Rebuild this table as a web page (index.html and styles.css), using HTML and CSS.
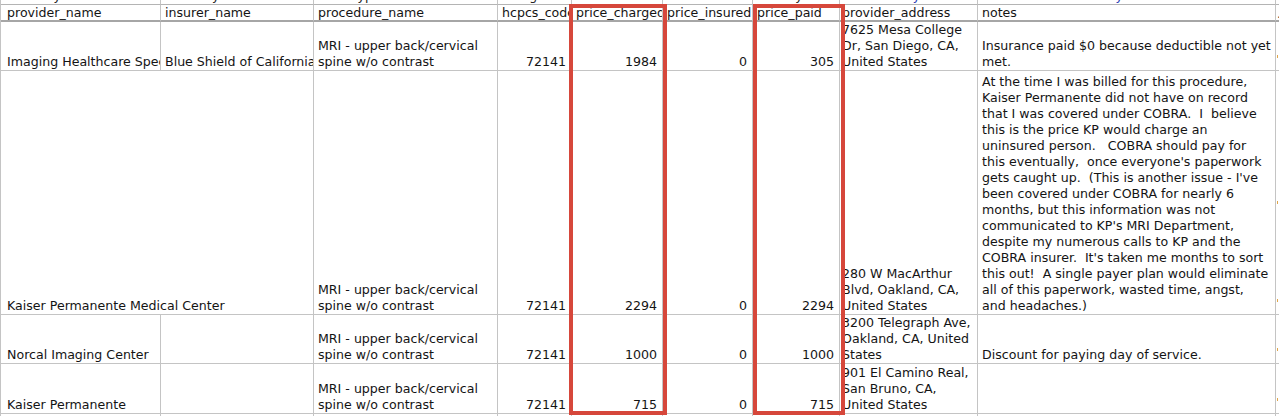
FILE: index.html
```html
<!DOCTYPE html>
<html>
<head>
<meta charset="utf-8">
<link rel="stylesheet" href="styles.css">
</head>
<body>
<div class="sheet">
  <div class="grid">
    <!-- row above header (only descenders visible) -->
    <div class="c top first">Costs by</div>
    <div class="c top">Billed by</div>
    <div class="c top">Scan types</div>
    <div class="c top">Using</div>
    <div class="c top"></div>
    <div class="c top"></div>
    <div class="c top">Paid by</div>
    <div class="c top link">Address key</div>
    <div class="c top link">Notes about this entry</div>
    <div class="c top last"></div>

    <!-- header -->
    <div class="c hd first">provider_name</div>
    <div class="c hd">insurer_name</div>
    <div class="c hd">procedure_name</div>
    <div class="c hd">hcpcs_code</div>
    <div class="c hd">price_charged</div>
    <div class="c hd">price_insured</div>
    <div class="c hd">price_paid</div>
    <div class="c hd addr">provider_address</div>
    <div class="c hd">notes</div>
    <div class="c hd last"><span class="dot">.</span></div>

    <!-- row 1 -->
    <div class="c first">Imaging Healthcare Specialists</div>
    <div class="c">Blue Shield of California</div>
    <div class="c wrap">MRI - upper back/cervical<br>spine w/o contrast</div>
    <div class="c num">72141</div>
    <div class="c num">1984</div>
    <div class="c num">0</div>
    <div class="c num">305</div>
    <div class="c wrap addr">7625 Mesa College<br>Dr, San Diego, CA,<br>United States</div>
    <div class="c wrap">Insurance paid $0 because deductible not yet<br>met.</div>
    <div class="c last"><span class="tick"></span></div>

    <!-- row 2 -->
    <div class="c first span2">Kaiser Permanente Medical Center</div>
    <div class="c wrap">MRI - upper back/cervical<br>spine w/o contrast</div>
    <div class="c num">72141</div>
    <div class="c num">2294</div>
    <div class="c num">0</div>
    <div class="c num">2294</div>
    <div class="c wrap addr">280 W MacArthur<br>Blvd, Oakland, CA,<br>United States</div>
    <div class="c wrap">At the time I was billed for this procedure,<br>Kaiser Permanente did not have on record<br>that I was covered under COBRA.  I  believe<br>this is the price KP would charge an<br>uninsured person.   COBRA should pay for<br>this eventually,  once everyone's paperwork<br>gets caught up.  (This is another issue - I've<br>been covered under COBRA for nearly 6<br>months, but this information was not<br>communicated to KP's MRI Department,<br>despite my numerous calls to KP and the<br>COBRA insurer.  It's taken me months to sort<br>this out!  A single payer plan would eliminate<br>all of this paperwork, wasted time, angst,<br>and headaches.)</div>
    <div class="c last col-ticks"><span class="tick"></span><span class="tick"></span></div>

    <!-- row 3 -->
    <div class="c first">Norcal Imaging Center</div>
    <div class="c"></div>
    <div class="c wrap">MRI - upper back/cervical<br>spine w/o contrast</div>
    <div class="c num">72141</div>
    <div class="c num">1000</div>
    <div class="c num">0</div>
    <div class="c num">1000</div>
    <div class="c wrap addr">3200 Telegraph Ave,<br>Oakland, CA, United<br>States</div>
    <div class="c wrap">Discount for paying day of service.</div>
    <div class="c last"><span class="tick"></span></div>

    <!-- row 4 -->
    <div class="c first">Kaiser Permanente</div>
    <div class="c"></div>
    <div class="c wrap">MRI - upper back/cervical<br>spine w/o contrast</div>
    <div class="c num">72141</div>
    <div class="c num">715</div>
    <div class="c num">0</div>
    <div class="c num">715</div>
    <div class="c wrap addr">901 El Camino Real,<br>San Bruno, CA,<br>United States</div>
    <div class="c wrap"></div>
    <div class="c last"><span class="tick"></span></div>

    <!-- row 5 (cut off) -->
    <div class="c first"></div>
    <div class="c"></div>
    <div class="c"></div>
    <div class="c"></div>
    <div class="c"></div>
    <div class="c"></div>
    <div class="c"></div>
    <div class="c"></div>
    <div class="c"></div>
    <div class="c last"></div>
  </div>

  <div class="highlight hl-charged"></div>
  <div class="highlight hl-paid"></div>
</div>
</body>
</html>
```

FILE: styles.css
```css
* {
  box-sizing: border-box;
}

html, body {
  margin: 0;
  padding: 0;
  background: #ffffff;
  overflow: hidden;
}

body {
  width: 1279px;
  height: 416px;
  font-family: "DejaVu Sans", Verdana, sans-serif;
  font-size: 12.6px;
  color: #141414;
}

.sheet {
  position: relative;
  width: 1279px;
  height: 416px;
  overflow: hidden;
}

.grid {
  display: grid;
  grid-template-columns: 160px 153px 184px 74px 91px 90px 87px 138px 298px 20px;
  grid-template-rows: 5px 17px 49px 244px 49px 50px 20px;
  border-left: 1px solid #c4c4c4;
  width: 1296px;
}

.c {
  border-right: 1px solid #c4c4c4;
  border-bottom: 1px solid #c4c4c4;
  padding: 0 4px;
  line-height: 16px;
  white-space: pre;
  overflow: hidden;
  display: flex;
  align-items: flex-end;
  min-width: 0;
}

.c.first {
  padding-left: 6px;
}

.c.addr {
  padding-left: 2px;
}

.c.top {
  border-bottom-color: #b4b4b4;
  color: #222;
}

.c.top.link {
  color: #2b3db5;
}

.c.hd {
  line-height: 15px;
  border-bottom: 2px solid #a6a6a6;
  align-items: center;
}

.c.num {
  justify-content: flex-end;
  padding-right: 5px;
}

.c.wrap {
  display: flex;
  flex-direction: column;
  justify-content: flex-end;
  align-items: flex-start;
}

.span2 {
  grid-column: span 2;
}

.c.last {
  border-right: none;
  padding: 0 1px;
  flex-direction: column;
  justify-content: flex-end;
  align-items: flex-start;
}

.dot {
  color: #333;
  line-height: 12px;
}

.tick {
  display: block;
  width: 1px;
  height: 3px;
  background: #e0a64a;
  margin-bottom: 12px;
}

.col-ticks .tick:first-child {
  margin-bottom: 95px;
}

.highlight {
  position: absolute;
  top: 4px;
  height: 411px;
  border: 4px solid #d6473b;
}

.hl-charged {
  left: 569px;
  width: 98px;
}

.hl-paid {
  left: 753px;
  width: 92px;
}
```
